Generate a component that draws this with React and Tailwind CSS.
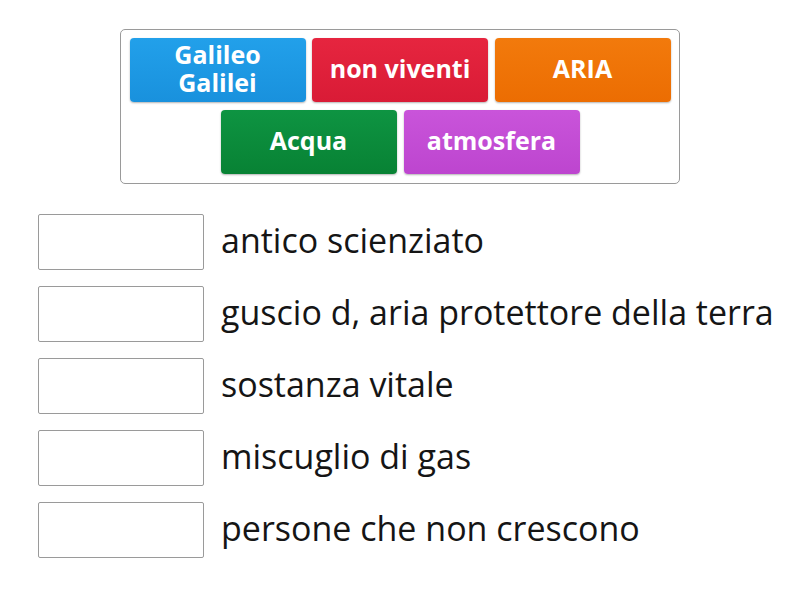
export default function App() {
  const tile = "w-[176px] h-[64px] rounded-[4px] flex items-center justify-center text-center text-white font-bold text-[25px] leading-[28px] pb-[4px] shadow-[0_1px_2px_rgba(0,0,0,0.3)]";
  const rows = [
    "antico scienziato",
    "guscio d, aria protettore della terra",
    "sostanza vitale",
    "miscuglio di gas",
    "persone che non crescono",
  ];
  return (
    <div className="w-[800px] h-[600px] bg-white" style={{ fontFamily: '"Open Sans", sans-serif' }}>
      <div className="pt-[29px] flex justify-center">
        <div className="w-[560px] h-[155px] border border-[#9a9a9a] rounded-[5px] px-[9px] pt-[8px] flex flex-col items-center gap-[8px]">
          <div className="flex gap-[6.5px]">
            <div className={`${tile} bg-gradient-to-b from-[#22a0ea] to-[#1991dd]`}>Galileo<br />Galilei</div>
            <div className={`${tile} bg-gradient-to-b from-[#e6253f] to-[#d91b36]`}>non viventi</div>
            <div className={`${tile} bg-gradient-to-b from-[#f27a0c] to-[#ec6d02]`}>ARIA</div>
          </div>
          <div className="flex gap-[7px]">
            <div className={`${tile} bg-gradient-to-b from-[#0e9442] to-[#088234]`}>Acqua</div>
            <div className={`${tile} bg-gradient-to-b from-[#c954da] to-[#bd45cf]`}>atmosfera</div>
          </div>
        </div>
      </div>
      <div className="mt-[30px] pl-[38px] flex flex-col gap-[17px]">
        {rows.map((r) => (
          <div key={r} className="flex items-center h-[55px]">
            <div className="w-[166px] h-[56px] border border-[#9a9a9a] rounded-[2px] bg-white shrink-0" />
            <div className="ml-[17px] text-[34px] text-[#151515] whitespace-nowrap leading-none pb-[4px]">{r}</div>
          </div>
        ))}
      </div>
    </div>
  );
}
